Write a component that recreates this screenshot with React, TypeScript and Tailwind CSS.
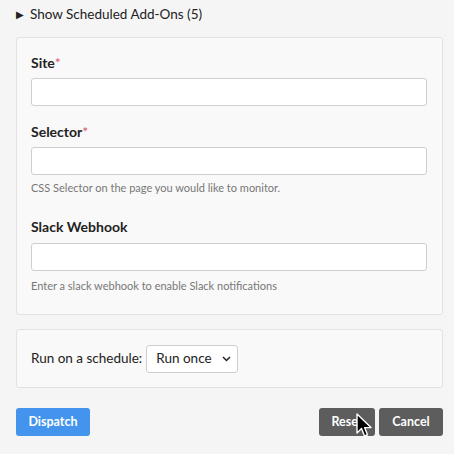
import React from "react";

function Cursor() {
  return (
    <svg
      className="absolute left-[355px] top-[413px] pointer-events-none"
      width="20"
      height="26"
      viewBox="0 0 20 26"
    >
      <path
        d="M2 1 L2 20 L6.5 15.5 L9.5 23 L12.5 21.8 L9.6 14.6 L16 14.6 Z"
        fill="#000"
        stroke="#fff"
        strokeWidth="1.4"
        strokeLinejoin="round"
      />
    </svg>
  );
}

export default function App() {
  const font = { fontFamily: "Lato, 'Open Sans', sans-serif" };
  return (
    <div
      className="relative w-[454px] h-[454px] bg-[#f5f5f5] text-[#222] pl-4 pr-[11px] overflow-hidden"
      style={font}
    >
      <div className="flex items-center h-[28px] text-[13.5px] text-[#222]">
        <span className="text-[10px] mr-[6px]">▶</span>
        <span>Show Scheduled Add-Ons (5)</span>
      </div>

      <div className="mt-[9px] bg-[#f9f9f9] border border-[#e2e2e2] rounded-[3px] pl-[14px] pr-[15px] pt-[16px] pb-[21px]">
        <div className="text-[14px] font-bold leading-[18px]">
          Site<span className="text-[#e0566b] font-normal">*</span>
        </div>
        <div className="mt-[6px] h-[28px] bg-white border border-[#cfcfcf] rounded-[3px]" />

        <div className="mt-[17px] text-[14px] font-bold leading-[18px]">
          Selector<span className="text-[#e0566b] font-normal">*</span>
        </div>
        <div className="mt-[6px] h-[28px] bg-white border border-[#cfcfcf] rounded-[3px]" />
        <div className="mt-[6px] text-[11px] leading-[14px] text-[#777]">
          CSS Selector on the page you would like to monitor.
        </div>

        <div className="mt-[23px] text-[14px] font-bold leading-[18px]">Slack Webhook</div>
        <div className="mt-[7px] h-[28px] bg-white border border-[#cfcfcf] rounded-[3px]" />
        <div className="mt-[8px] text-[11px] leading-[14px] text-[#777]">
          Enter a slack webhook to enable Slack notifications
        </div>
      </div>

      <div className="mt-[14px] h-[59px] bg-[#f9f9f9] border border-[#e2e2e2] rounded-[3px] px-[14px] flex items-center">
        <span className="text-[13.5px] mr-[4px]">Run on a schedule:</span>
        <div className="w-[92px] h-[28px] bg-white border border-[#cfcfcf] rounded-[3px] flex items-center justify-between pl-[9px] pr-[6px] text-[13.5px]">
          <span>Run once</span>
          <svg width="9" height="6" viewBox="0 0 9 6">
            <path d="M1 1 L4.5 4.5 L8 1" fill="none" stroke="#222" strokeWidth="1.5" />
          </svg>
        </div>
      </div>

      <div className="mt-[20px] flex items-center">
        <div className="w-[74px] h-[28px] rounded-[3px] bg-[#4494ee] text-white text-[12.5px] font-bold flex items-center justify-center">
          Dispatch
        </div>
        <div className="ml-auto flex gap-[4px]">
          <div className="w-[56px] h-[28px] rounded-[3px] bg-[#5d5d5d] text-white text-[12.5px] font-bold flex items-center justify-center">
            Reset
          </div>
          <div className="w-[64px] h-[28px] rounded-[3px] bg-[#5d5d5d] text-white text-[12.5px] font-bold flex items-center justify-center">
            Cancel
          </div>
        </div>
      </div>

      <Cursor />
    </div>
  );
}
